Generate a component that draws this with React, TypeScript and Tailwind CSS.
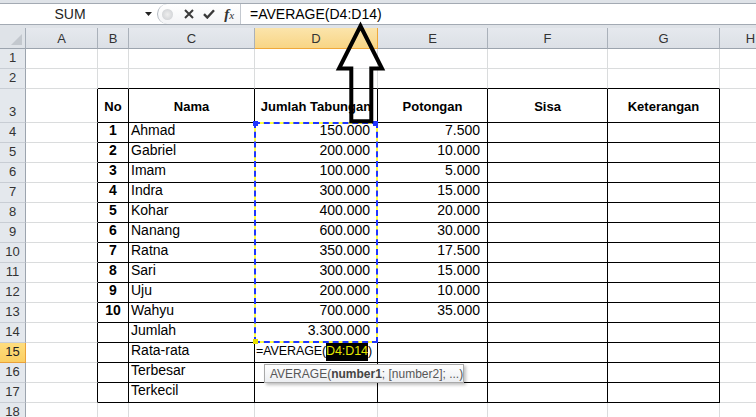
import type { ReactNode } from 'react';

type Col = { key: string; w: string };

const COLS: Col[] = [
  { key: 'A', w: 'w-[72px]' },
  { key: 'B', w: 'w-[31px]' },
  { key: 'C', w: 'w-[126px]' },
  { key: 'D', w: 'w-[123px]' },
  { key: 'E', w: 'w-[110px]' },
  { key: 'F', w: 'w-[120px]' },
  { key: 'G', w: 'w-[112px]' },
  { key: 'H', w: 'w-[62px]' },
];

const ROWS = Array.from({ length: 18 }, (_, i) => i + 1);

const people = [
  ['Ahmad', '150.000', '7.500'],
  ['Gabriel', '200.000', '10.000'],
  ['Imam', '100.000', '5.000'],
  ['Indra', '300.000', '15.000'],
  ['Kohar', '400.000', '20.000'],
  ['Nanang', '600.000', '30.000'],
  ['Ratna', '350.000', '17.500'],
  ['Sari', '300.000', '15.000'],
  ['Uju', '200.000', '10.000'],
  ['Wahyu', '700.000', '35.000'],
];

const headings: Record<string, string> = {
  B: 'No',
  C: 'Nama',
  D: 'Jumlah Tabungan',
  E: 'Potongan',
  F: 'Sisa',
  G: 'Keterangan',
};

const footer: Record<number, string> = {
  14: 'Jumlah',
  15: 'Rata-rata',
  16: 'Terbesar',
  17: 'Terkecil',
};

function cellBody(r: number, c: string): ReactNode {
  if (r === 3 && headings[c]) {
    return (
      <div className="flex-1 flex items-center justify-center pt-[2px] text-[13px] font-bold whitespace-nowrap">
        {headings[c]}
      </div>
    );
  }
  if (r >= 4 && r <= 13) {
    const p = people[r - 4];
    if (c === 'B') return <div className="flex-1 flex items-end justify-center pb-[1px] font-bold">{r - 3}</div>;
    if (c === 'C') return <div className="flex-1 flex items-end pl-[2px] pb-[1px]">{p[0]}</div>;
    if (c === 'D') return <div className="flex-1 flex items-end justify-end pr-[7px] pb-[1px]">{p[1]}</div>;
    if (c === 'E') return <div className="flex-1 flex items-end justify-end pr-[7px] pb-[1px]">{p[2]}</div>;
  }
  if (footer[r] && c === 'C') return <div className="flex-1 flex items-end pl-[2px] pb-[1px]">{footer[r]}</div>;
  if (r === 14 && c === 'D') return <div className="flex-1 flex items-end justify-end pr-[7px] pb-[1px]">3.300.000</div>;
  if (r === 15 && c === 'D') {
    return (
      <div className="flex-1 flex items-end pl-[1px] pb-[1px] text-[12.5px] tracking-[-0.1px] whitespace-nowrap">
        =AVERAGE(<span className="bg-black text-[#e4e600]">D4:D14</span>)
      </div>
    );
  }
  return null;
}

function Cell({ r, col }: { r: number; col: Col }) {
  const tableRight = r >= 3 && r <= 17 && col.key !== 'H';
  const tableBottom = r >= 2 && r <= 17 && col.key !== 'A' && col.key !== 'H';
  return (
    <div
      className={`shrink-0 flex border-r border-b ${col.w} ${tableRight ? 'border-r-black' : 'border-r-[#dadcdd]'} ${
        tableBottom ? 'border-b-black' : 'border-b-[#dadcdd]'
      }`}
    >
      {cellBody(r, col.key)}
    </div>
  );
}

function FormulaBar() {
  return (
    <div className="h-[28px] bg-[#dfe3e8] pt-[3px] pb-[3px]">
      <div className="h-[22px] bg-white border-y border-[#a3aab3] flex">
        <div className="w-[140px] flex items-center justify-center text-[14px] text-[#1e1e1e]">SUM</div>
        <div className="w-[17px] flex items-center justify-center">
          <svg width="7" height="4" viewBox="0 0 7 4">
            <path d="M0 0h7L3.5 4z" fill="#222" />
          </svg>
        </div>
        <div className="w-[83px] flex items-center border-l border-[#b3b9c1] rounded-l-[11px] bg-linear-to-b from-white to-[#f3f4f6]">
          <div className="w-[20px] flex justify-center">
            <div className="w-[11px] h-[11px] rounded-full bg-radial from-[#eeeeee] to-[#c9ccd0]" />
          </div>
          <div className="w-[22px] flex justify-center">
            <svg width="10" height="10" viewBox="0 0 10 10">
              <path d="M1 1L9 9M9 1L1 9" stroke="#3a3a3a" strokeWidth="2" />
            </svg>
          </div>
          <div className="w-[19px] flex justify-center">
            <svg width="12" height="10" viewBox="0 0 12 10">
              <path d="M1 5.2L4.3 8.5L11 1.2" stroke="#3a3a3a" strokeWidth="2.4" fill="none" />
            </svg>
          </div>
          <div className="w-[22px] flex justify-center items-center font-['Liberation_Serif',serif] italic text-[#333]">
            <span className="text-[15px] font-bold leading-none">f</span>
            <span className="text-[11px] leading-none mt-[3px]">x</span>
          </div>
        </div>
        <div className="flex-1 border-l border-[#c3c8cf] flex items-center pl-[9px] text-[14px] text-black whitespace-nowrap">
          =AVERAGE(D4:D14)
        </div>
      </div>
    </div>
  );
}

function HeaderRow() {
  return (
    <div className="flex h-[21px]">
      <div className="w-[26px] shrink-0 border-r border-b border-r-[#a5adb7] border-b-[#9ca4ae] bg-[#dfe3e8] relative">
        <svg className="absolute right-[3px] bottom-[3px]" width="11" height="11" viewBox="0 0 11 11">
          <path d="M11 0V11H0z" fill="#c3c8ce" />
        </svg>
      </div>
      {COLS.map((c) => (
        <div
          key={c.key}
          className={`${c.w} shrink-0 flex items-center justify-center pt-[2px] text-[13px] border-r border-b ${
            c.key === 'D'
              ? 'bg-linear-to-b from-[#fbe4ab] to-[#f8d585] border-r-[#efa83a] border-b-[#efa83a] text-[#333]'
              : 'bg-linear-to-b from-[#e6e9ee] to-[#dce0e6] border-r-[#aab1ba] border-b-[#9ca4ae] text-[#333]'
          }`}
        >
          {c.key}
        </div>
      ))}
    </div>
  );
}

export default function App() {
  return (
    <div className="relative w-[756px] h-[417px] overflow-hidden bg-white font-['Liberation_Sans',Arial,sans-serif] text-[14px] text-black">
      <FormulaBar />
      <HeaderRow />
      {ROWS.map((r) => (
        <div key={r} className={`flex ${r === 3 ? 'h-[34px]' : 'h-[20px]'}`}>
          <div
            className={`w-[26px] shrink-0 flex items-end justify-center pb-[1px] text-[13px] border-r border-b ${
              r === 15
                ? 'bg-linear-to-b from-[#fedd7d] to-[#fbcf62] border-r-[#e9a13a] border-b-[#e9a13a] text-[#222]'
                : 'bg-[#e4e8ed] border-r-[#9ca4ae] border-b-[#c8cdd4] text-[#333]'
            }`}
          >
            {r}
          </div>
          {COLS.map((c) => (
            <Cell key={c.key} r={r} col={c} />
          ))}
        </div>
      ))}

      {/* referenced range D4:D14 */}
      <div className="absolute left-[254px] top-[122px] w-[124px] h-[221px] border-2 border-[#ffff3c] pointer-events-none" />
      <div className="absolute left-[254px] top-[122px] w-[124px] h-[221px] border-2 border-dashed border-[#1f35ff] pointer-events-none" />
      <div className="absolute left-[253px] top-[121px] w-[5px] h-[5px] bg-[#1f35ff]" />
      <div className="absolute left-[373px] top-[121px] w-[5px] h-[5px] bg-[#1f35ff]" />
      <div className="absolute left-[253px] top-[339px] w-[5px] h-[5px] bg-[#e8e000]" />

      {/* function tooltip */}
      <div className="absolute left-[264px] top-[364px] w-[200px] h-[19px] border border-[#a9a9a9] bg-linear-to-b from-white to-[#eceef1] shadow-[2px_2px_3px_rgba(0,0,0,0.25)] flex items-center pl-[5px] text-[12px] text-[#575757] whitespace-nowrap">
        AVERAGE(<span className="font-bold text-[#444]">number1</span>; [number2]; ...)
      </div>

      {/* drawn arrow */}
      <svg className="absolute left-0 top-0 pointer-events-none" width="756" height="417" viewBox="0 0 756 417">
        <polygon
          points="360.5,26 339,68.5 351.3,68.5 351.3,121.3 371.3,121.3 371.3,68.5 382,68.5"
          fill="none"
          stroke="#000"
          strokeWidth="4"
          strokeLinejoin="miter"
        />
      </svg>
    </div>
  );
}
